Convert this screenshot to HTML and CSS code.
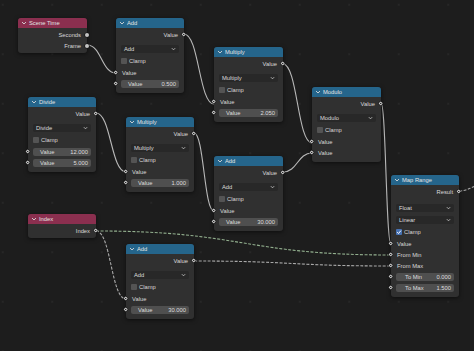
FILE: index.html
```html
<!DOCTYPE html>
<html lang="en">
<head>
    <meta charset="UTF-8">
    <title>Node Editor</title>
    <link rel="stylesheet" href="styles.css">
</head>
<body>

    <div class="editor">

        <svg class="links" width="474" height="351" viewBox="0 0 474 351">
            <path d="M87,45 C101.5,45 101.5,73 116,73" />
            <path d="M184,34 C199,34 199,104 214,104" />
            <path d="M283,64 C297.5,64 297.5,143 312,143" />
            <path d="M96,113 C111,113 111,172 126,172" />
            <path d="M194,133 C204,133 204,211 214,211" />
            <path d="M283,172 C297.5,172 297.5,153 312,153" />
            <path d="M381,103 C386,103 386,244 391,244" />
            <path class="dash green" d="M96,231 C243.5,231 243.5,255 391,255" />
            <path class="dash" d="M96,231 C111,231 111,299 126,299" />
            <path class="dash" d="M194,261 C292.5,261 292.5,266 391,266" />
            <path class="dash" d="M459,191 C468,191 470,187 480,185" />
        </svg>

        <!-- Scene Time -->
        <div class="node n-scene">
            <div class="head pink"><svg class="chev" viewBox="0 0 6 4"><polyline points="1,1 3,3 5,1" /></svg>Scene Time</div>
            <div class="body short">
                <div class="row out">Seconds<i class="sock"></i></div>
                <div class="row out">Frame<i class="sock"></i></div>
            </div>
        </div>

        <!-- Add top -->
        <div class="node n-add1">
            <div class="head blue"><svg class="chev" viewBox="0 0 6 4"><polyline points="1,1 3,3 5,1" /></svg>Add</div>
            <div class="body">
                <div class="row out">Value<i class="sock field"></i></div>
                <div class="row menu"><div class="select">Add<svg class="arrow" viewBox="0 0 6 4"><polyline points="1,1 3,3 5,1" /></svg></div></div>
                <div class="row check"><span class="box"></span>Clamp</div>
                <div class="row in"><i class="sock field"></i>Value</div>
                <div class="row in"><i class="sock field"></i><div class="num"><span>Value</span><span>0.500</span></div></div>
            </div>
        </div>

        <!-- Multiply top -->
        <div class="node n-mul1">
            <div class="head blue"><svg class="chev" viewBox="0 0 6 4"><polyline points="1,1 3,3 5,1" /></svg>Multiply</div>
            <div class="body">
                <div class="row out">Value<i class="sock field"></i></div>
                <div class="row menu"><div class="select">Multiply<svg class="arrow" viewBox="0 0 6 4"><polyline points="1,1 3,3 5,1" /></svg></div></div>
                <div class="row check"><span class="box"></span>Clamp</div>
                <div class="row in"><i class="sock field"></i>Value</div>
                <div class="row in"><i class="sock field"></i><div class="num"><span>Value</span><span>2.050</span></div></div>
            </div>
        </div>

        <!-- Modulo -->
        <div class="node n-mod">
            <div class="head blue"><svg class="chev" viewBox="0 0 6 4"><polyline points="1,1 3,3 5,1" /></svg>Modulo</div>
            <div class="body">
                <div class="row out">Value<i class="sock field"></i></div>
                <div class="row menu"><div class="select">Modulo<svg class="arrow" viewBox="0 0 6 4"><polyline points="1,1 3,3 5,1" /></svg></div></div>
                <div class="row check"><span class="box"></span>Clamp</div>
                <div class="row in"><i class="sock field"></i>Value</div>
                <div class="row in"><i class="sock field"></i>Value</div>
            </div>
        </div>

        <!-- Divide -->
        <div class="node n-div">
            <div class="head blue"><svg class="chev" viewBox="0 0 6 4"><polyline points="1,1 3,3 5,1" /></svg>Divide</div>
            <div class="body">
                <div class="row out">Value<i class="sock field"></i></div>
                <div class="row menu"><div class="select">Divide<svg class="arrow" viewBox="0 0 6 4"><polyline points="1,1 3,3 5,1" /></svg></div></div>
                <div class="row check"><span class="box"></span>Clamp</div>
                <div class="row in"><i class="sock field"></i><div class="num"><span>Value</span><span>12.000</span></div></div>
                <div class="row in"><i class="sock field"></i><div class="num"><span>Value</span><span>5.000</span></div></div>
            </div>
        </div>

        <!-- Multiply middle -->
        <div class="node n-mul2">
            <div class="head blue"><svg class="chev" viewBox="0 0 6 4"><polyline points="1,1 3,3 5,1" /></svg>Multiply</div>
            <div class="body">
                <div class="row out">Value<i class="sock field"></i></div>
                <div class="row menu"><div class="select">Multiply<svg class="arrow" viewBox="0 0 6 4"><polyline points="1,1 3,3 5,1" /></svg></div></div>
                <div class="row check"><span class="box"></span>Clamp</div>
                <div class="row in"><i class="sock field"></i>Value</div>
                <div class="row in"><i class="sock field"></i><div class="num"><span>Value</span><span>1.000</span></div></div>
            </div>
        </div>

        <!-- Add middle -->
        <div class="node n-add2">
            <div class="head blue"><svg class="chev" viewBox="0 0 6 4"><polyline points="1,1 3,3 5,1" /></svg>Add</div>
            <div class="body">
                <div class="row out">Value<i class="sock field"></i></div>
                <div class="row menu"><div class="select">Add<svg class="arrow" viewBox="0 0 6 4"><polyline points="1,1 3,3 5,1" /></svg></div></div>
                <div class="row check"><span class="box"></span>Clamp</div>
                <div class="row in"><i class="sock field"></i>Value</div>
                <div class="row in"><i class="sock field"></i><div class="num"><span>Value</span><span>30.000</span></div></div>
            </div>
        </div>

        <!-- Map Range -->
        <div class="node n-map">
            <div class="head blue"><svg class="chev" viewBox="0 0 6 4"><polyline points="1,1 3,3 5,1" /></svg>Map Range</div>
            <div class="body">
                <div class="row out">Result<i class="sock field"></i></div>
                <div class="row menu wide"><div class="select">Float<svg class="arrow" viewBox="0 0 6 4"><polyline points="1,1 3,3 5,1" /></svg></div></div>
                <div class="row menu"><div class="select">Linear<svg class="arrow" viewBox="0 0 6 4"><polyline points="1,1 3,3 5,1" /></svg></div></div>
                <div class="row check"><span class="box on"><svg viewBox="0 0 6 6"><polyline points="1.2,3.2 2.5,4.5 4.9,1.6" /></svg></span>Clamp</div>
                <div class="row in"><i class="sock field"></i>Value</div>
                <div class="row in"><i class="sock field"></i>From Min</div>
                <div class="row in"><i class="sock field"></i>From Max</div>
                <div class="row in"><i class="sock field"></i><div class="num center"><span>To Min</span><span>0.000</span></div></div>
                <div class="row in"><i class="sock field"></i><div class="num center"><span>To Max</span><span>1.500</span></div></div>
            </div>
        </div>

        <!-- Index -->
        <div class="node n-index">
            <div class="head pink"><svg class="chev" viewBox="0 0 6 4"><polyline points="1,1 3,3 5,1" /></svg>Index</div>
            <div class="body short">
                <div class="row out">Index<i class="sock field"></i></div>
            </div>
        </div>

        <!-- Add bottom -->
        <div class="node n-add3">
            <div class="head blue"><svg class="chev" viewBox="0 0 6 4"><polyline points="1,1 3,3 5,1" /></svg>Add</div>
            <div class="body">
                <div class="row out">Value<i class="sock field"></i></div>
                <div class="row menu"><div class="select">Add<svg class="arrow" viewBox="0 0 6 4"><polyline points="1,1 3,3 5,1" /></svg></div></div>
                <div class="row check"><span class="box"></span>Clamp</div>
                <div class="row in"><i class="sock field"></i>Value</div>
                <div class="row in"><i class="sock field"></i><div class="num"><span>Value</span><span>30.000</span></div></div>
            </div>
        </div>

    </div>

</body>
</html>
```

FILE: styles.css
```css
body {
    margin: 0;
    padding: 0;
    background: #1d1d1d;
    font-family: "Liberation Sans", Arial, sans-serif;
    font-size: 5.8px;
    color: #d9d9d9;
    overflow: hidden;
}

.editor {
    position: relative;
    width: 474px;
    height: 351px;
    overflow: hidden;
    background-color: #1d1d1d;
    background-image: radial-gradient(circle, #272727 0.8px, transparent 1.1px);
    background-size: 49.5px 49.5px;
    background-position: -22px -20px;
}

.links {
    position: absolute;
    left: 0;
    top: 0;
}

.links path {
    fill: none;
    stroke: #b9b9b9;
    stroke-width: 1.1;
}

.links .dash {
    stroke-dasharray: 3 1.5;
    stroke: #a9a9a9;
}

.links .green {
    stroke: #93b08f;
}

/* nodes */
.node {
    position: absolute;
    width: 68px;
    background: #303030;
    border-radius: 3px;
    box-shadow: 0 1px 4px rgba(0, 0, 0, 0.55);
}

.n-scene { left: 18px; top: 18px; width: 69px; }
.n-add1  { left: 116px; top: 18px; }
.n-mul1  { left: 214px; top: 47px; width: 69px; }
.n-mod   { left: 312px; top: 87px; width: 69px; }
.n-div   { left: 28px; top: 97px; }
.n-mul2  { left: 126px; top: 117px; }
.n-add2  { left: 214px; top: 156px; width: 69px; }
.n-map   { left: 391px; top: 175px; }
.n-index { left: 28px; top: 214px; }
.n-add3  { left: 126px; top: 244px; }

.head {
    height: 10px;
    display: flex;
    align-items: center;
    padding-left: 3px;
    border-radius: 3px 3px 0 0;
    color: #e4e4e4;
}

.blue {
    background: #25658b;
}

.pink {
    background: #8b2f4f;
}

.chev {
    width: 6px;
    height: 4px;
    margin-right: 2px;
}

.chev polyline, .arrow polyline {
    fill: none;
    stroke: #d8d8d8;
    stroke-width: 0.9;
}

.body {
    padding: 1px 0 4px;
}

.body.short {
    padding-bottom: 2px;
}

.row {
    position: relative;
    height: 11px;
    display: flex;
    align-items: center;
    padding: 0 5px;
}

.row.out {
    justify-content: flex-end;
    padding-right: 6px;
}

.row.in {
    padding-left: 6px;
}

.row.menu {
    height: 12px;
}

.out + .menu {
    margin-top: 3px;
}

.out + .menu.wide {
    margin-top: 5px;
}

.select {
    flex: 1;
    height: 8px;
    background: #282828;
    border-radius: 2px;
    display: flex;
    align-items: center;
    justify-content: space-between;
    padding: 0 3px 0 3px;
    color: #dcdcdc;
}

.arrow {
    width: 5px;
    height: 4px;
}

.row.check {
    height: 12px;
}

.box {
    width: 6px;
    height: 6px;
    background: #545454;
    border-radius: 1px;
    margin-right: 2px;
    display: flex;
}

.box.on {
    background: #4772b3;
}

.box svg {
    width: 6px;
    height: 6px;
}

.box polyline {
    fill: none;
    stroke: #fff;
    stroke-width: 1;
}

.num {
    flex: 1;
    height: 8px;
    margin-left: -1px;
    background: #4f4f4f;
    border-radius: 2px;
    display: flex;
    align-items: center;
    justify-content: space-between;
    padding: 0 3px 0 7px;
    color: #dedede;
}

.num.center span:first-child {
    margin-left: 2px;
}

/* sockets */
.sock {
    position: absolute;
    top: 50%;
    width: 4px;
    height: 4px;
    margin-top: -2px;
    border-radius: 50%;
    background: #c3c3c3;
    box-shadow: 0 0 0 0.6px #151515;
}

.out .sock {
    right: -2px;
}

.in .sock {
    left: -2px;
}

.sock.field {
    width: 3.4px;
    height: 3.4px;
    margin-top: -1.7px;
    border-radius: 0.5px;
    transform: rotate(45deg);
    background: radial-gradient(circle, #2a2a2a 0.6px, #c3c3c3 0.9px);
}

.out .sock.field {
    right: -1.7px;
}

.in .sock.field {
    left: -1.7px;
}
```
